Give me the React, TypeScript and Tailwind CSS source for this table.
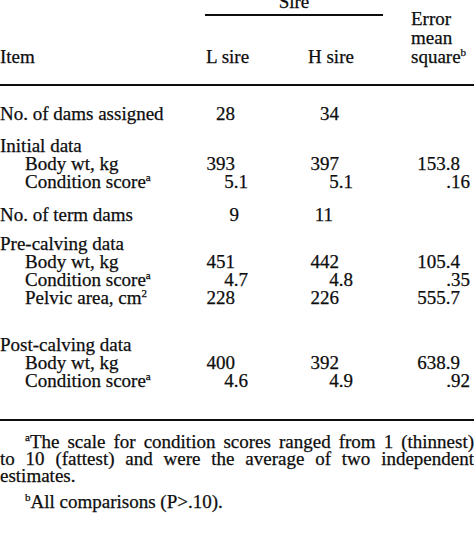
import React from 'react'

type Row = {
  label: string
  sup?: string
  indent?: boolean
  l?: string
  h?: string
  e?: string
  mt: string
}

const rows: Row[] = [
  { label: 'No. of dams assigned', l: '28', h: '34', mt: 'mt-[19px]' },
  { label: 'Initial data', mt: 'mt-[14px]' },
  { label: 'Body wt, kg', indent: true, l: '393', h: '397', e: '153.8', mt: 'mt-0' },
  { label: 'Condition score', sup: 'a', indent: true, l: '5.1', h: '5.1', e: '.16', mt: 'mt-0' },
  { label: 'No. of term dams', l: '9', h: '11', mt: 'mt-[15px]' },
  { label: 'Pre-calving data', mt: 'mt-[11px]' },
  { label: 'Body wt, kg', indent: true, l: '451', h: '442', e: '105.4', mt: 'mt-0' },
  { label: 'Condition score', sup: 'a', indent: true, l: '4.7', h: '4.8', e: '.35', mt: 'mt-0' },
  { label: 'Pelvic area, cm', sup: '2', indent: true, l: '228', h: '226', e: '555.7', mt: 'mt-0' },
  { label: 'Post-calving data', mt: 'mt-[29px]' },
  { label: 'Body wt, kg', indent: true, l: '400', h: '392', e: '638.9', mt: 'mt-0' },
  { label: 'Condition score', sup: 'a', indent: true, l: '4.6', h: '4.9', e: '.92', mt: 'mt-0' },
]

// decimal-ish alignment: numbers with a fraction sit a bit further right
function lPad(v: string) {
  if (v === '9') return 'pr-[66px]'
  return v.includes('.') ? 'pr-[57px]' : 'pr-[70px]'
}
function hPad(v: string) {
  if (v === '11') return 'pr-[78px]'
  return v.includes('.') ? 'pr-[58px]' : 'pr-[72px]'
}
function ePad(v: string) {
  return v.startsWith('.') ? 'pr-[4px]' : 'pr-[14px]'
}

const supCls = 'text-[11px] relative -top-[7px] align-baseline'

export default function App() {
  return (
    <div className="w-[474px] h-[537px] overflow-hidden bg-white text-[#0d0d0d] text-[19px] leading-[18px] font-['Liberation_Serif',serif] [-webkit-text-stroke:0.25px_#0d0d0d]">
      {/* header */}
      <div className="flex h-[84px]">
        <div className="w-[205px] pt-[48px]">Item</div>
        <div className="w-[206px]">
          <div className="w-[178px] -mt-[7px] text-center">Sire</div>
          <div className="w-[178px] h-[2px] bg-[#0d0d0d] mt-[3px]" />
          <div className="flex mt-[32px]">
            <div className="w-[103px] pl-[1px]">L sire</div>
            <div>H sire</div>
          </div>
        </div>
        <div className="pt-[9px] leading-[19px]">
          <div>Error</div>
          <div>mean</div>
          <div>
            square<sup className={supCls}>b</sup>
          </div>
        </div>
      </div>
      <div className="h-[2px] bg-[#0d0d0d]" />

      {/* body */}
      <div>
        {rows.map((r, i) => (
          <div key={i} className={`flex h-[18px] ${r.mt}`}>
            <div className={`w-[205px] whitespace-nowrap ${r.indent ? 'pl-[25px]' : ''}`}>
              {r.label}
              {r.sup && <sup className={supCls}>{r.sup}</sup>}
            </div>
            <div className={`w-[100px] text-right ${r.l ? lPad(r.l) : ''}`}>{r.l}</div>
            <div className={`w-[106px] text-right ${r.h ? hPad(r.h) : ''}`}>{r.h}</div>
            <div className={`w-[63px] text-right ${r.e ? ePad(r.e) : ''}`}>{r.e}</div>
          </div>
        ))}
      </div>

      <div className="h-[2px] bg-[#0d0d0d] mt-[29px]" />

      {/* footnotes */}
      <div className="mt-[12px] leading-[17px]">
        <div className="pl-[25px] whitespace-nowrap text-justify [text-align-last:justify]">
          <sup className={supCls}>a</sup>The scale for condition scores ranged from 1 (thinnest)
        </div>
        <div className="whitespace-nowrap text-justify [text-align-last:justify]">
          to 10 (fattest) and were the average of two independent
        </div>
        <div>estimates.</div>
        <div className="pl-[25px] mt-[9px]">
          <sup className={supCls}>b</sup>All comparisons (P&gt;.10).
        </div>
      </div>
    </div>
  )
}
